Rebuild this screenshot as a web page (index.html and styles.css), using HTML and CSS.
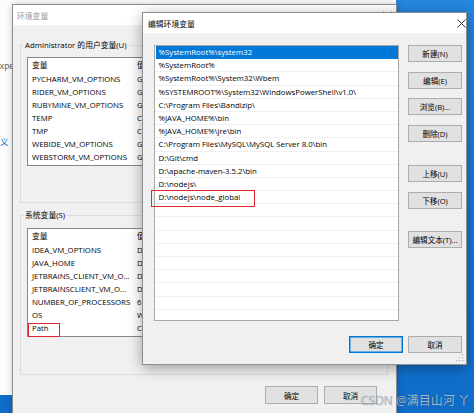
FILE: index.html
```html
<!DOCTYPE html>
<html lang="zh">
<head>
<meta charset="utf-8">
<title>编辑环境变量</title>
<link rel="stylesheet" href="styles.css">
</head>
<body>
<div class="desktop">
  <div class="settings">
    <div class="s-exp">Experience</div>
    <div class="s-link">自定义</div>
  </div>

  <div class="win env">
    <div class="titlebar">
      <span class="title inactive">环境变量</span>
      <svg class="close" viewBox="0 0 10 10" width="9" height="9"><path d="M0.5 0.5 L9.5 9.5 M9.5 0.5 L0.5 9.5" stroke="#777" stroke-width="1" fill="none"/></svg>
    </div>
    <div class="env-body">
      <fieldset class="group g-user">
        <legend>Administrator 的用户变量(U)</legend>
        <div class="lv">
          <div class="lv-head"><span class="c1">变量</span><span class="c2">值</span></div>
          <div class="lv-row"><span class="c1">PYCHARM_VM_OPTIONS</span><span class="c2">G:\...</span></div>
          <div class="lv-row"><span class="c1">RIDER_VM_OPTIONS</span><span class="c2">G:\...</span></div>
          <div class="lv-row"><span class="c1">RUBYMINE_VM_OPTIONS</span><span class="c2">G:\...</span></div>
          <div class="lv-row"><span class="c1">TEMP</span><span class="c2">C:\...</span></div>
          <div class="lv-row"><span class="c1">TMP</span><span class="c2">C:\...</span></div>
          <div class="lv-row"><span class="c1">WEBIDE_VM_OPTIONS</span><span class="c2">G:\...</span></div>
          <div class="lv-row"><span class="c1">WEBSTORM_VM_OPTIONS</span><span class="c2">G:\...</span></div>
        </div>
      </fieldset>

      <fieldset class="group g-sys">
        <legend>系统变量(S)</legend>
        <div class="lv">
          <div class="lv-head"><span class="c1">变量</span><span class="c2">值</span></div>
          <div class="lv-row"><span class="c1">IDEA_VM_OPTIONS</span><span class="c2">D:\...</span></div>
          <div class="lv-row"><span class="c1">JAVA_HOME</span><span class="c2">D:\...</span></div>
          <div class="lv-row"><span class="c1">JETBRAINS_CLIENT_VM_O...</span><span class="c2">D:\...</span></div>
          <div class="lv-row"><span class="c1">JETBRAINSCLIENT_VM_O...</span><span class="c2">D:\...</span></div>
          <div class="lv-row"><span class="c1">NUMBER_OF_PROCESSORS</span><span class="c2">6</span></div>
          <div class="lv-row"><span class="c1">OS</span><span class="c2">W...</span></div>
          <div class="lv-row"><span class="c1">Path</span><span class="c2">C:\...</span></div>
        </div>
        <div class="btnrow">
          <button class="btn">新建(W)...</button>
          <button class="btn">编辑(I)...</button>
          <button class="btn">删除(L)</button>
        </div>
      </fieldset>

      <div class="env-foot">
        <button class="btn big">确定</button>
        <button class="btn big">取消</button>
      </div>
    </div>
    <div class="mark mark-path"></div>
  </div>

  <div class="win edit">
    <div class="titlebar">
      <span class="title">编辑环境变量</span>
      <svg class="close" viewBox="0 0 10 10" width="9" height="9"><path d="M0.5 0.5 L9.5 9.5 M9.5 0.5 L0.5 9.5" stroke="#222" stroke-width="1" fill="none"/></svg>
    </div>
    <div class="edit-body">
      <div class="elist">
        <div class="er sel">%SystemRoot%\system32</div>
        <div class="er">%SystemRoot%</div>
        <div class="er">%SystemRoot%\System32\Wbem</div>
        <div class="er">%SYSTEMROOT%\System32\WindowsPowerShell\v1.0\</div>
        <div class="er">C:\Program Files\Bandizip\</div>
        <div class="er">%JAVA_HOME%\bin</div>
        <div class="er">%JAVA_HOME%\jre\bin</div>
        <div class="er">C:\Program Files\MySQL\MySQL Server 8.0\bin</div>
        <div class="er">D:\Git\cmd</div>
        <div class="er">D:\apache-maven-3.5.2\bin</div>
        <div class="er">D:\nodejs\</div>
        <div class="er">D:\nodejs\node_global</div>
        <div class="er"></div>
        <div class="er"></div>
        <div class="er"></div>
        <div class="er"></div>
        <div class="er"></div>
        <div class="er"></div>
        <div class="er"></div>
        <div class="er"></div>
        <div class="er"></div>
        <div class="er"></div>
      </div>
      <div class="ebtns">
        <button class="btn eb">新建(N)</button>
        <button class="btn eb">编辑(E)</button>
        <button class="btn eb">浏览(B)...</button>
        <button class="btn eb">删除(D)</button>
        <button class="btn eb sep">上移(U)</button>
        <button class="btn eb">下移(O)</button>
        <button class="btn eb sep2">编辑文本(T)...</button>
      </div>
    </div>
    <div class="edit-foot">
      <button class="btn eb default">确定</button>
      <button class="btn eb">取消</button>
    </div>
    <div class="mark mark-node"></div>
    <svg class="grip" viewBox="0 0 8 8" width="8" height="8">
      <rect x="6" y="0" width="1.2" height="1.2" fill="#b5b5b5"/>
      <rect x="3" y="3" width="1.2" height="1.2" fill="#b5b5b5"/>
      <rect x="6" y="3" width="1.2" height="1.2" fill="#b5b5b5"/>
      <rect x="0" y="6" width="1.2" height="1.2" fill="#b5b5b5"/>
      <rect x="3" y="6" width="1.2" height="1.2" fill="#b5b5b5"/>
      <rect x="6" y="6" width="1.2" height="1.2" fill="#b5b5b5"/>
    </svg>
  </div>

  <div class="watermark">CSDN @满目山河 丫</div>
</div>
</body>
</html>
```

FILE: styles.css
```css
* {
  box-sizing: border-box;
}

body {
  margin: 0;
  width: 474px;
  height: 413px;
  overflow: hidden;
  font-family: "Open Sans", "Noto Sans CJK SC", sans-serif;
  font-size: 7.8px;
  color: #000;
}

.desktop {
  position: relative;
  width: 474px;
  height: 413px;
  overflow: hidden;
  background: linear-gradient(180deg, #2587dd 0%, #1677d3 60%, #0f6cc9 100%);
}

/* settings window far behind */
.settings {
  position: absolute;
  left: -120px;
  top: 0;
  width: 516px;
  height: 395px;
  background: #fdfdfd;
  padding-top: 60px;
  font-size: 8.5px;
  white-space: nowrap;
}

.s-exp {
  margin-left: 115px;
  line-height: 12px;
  color: #555;
}

.s-link {
  margin-left: 103px;
  margin-top: 64px;
  line-height: 12px;
  color: #0067c0;
}

/* generic window */
.win {
  position: absolute;
  background: #f0f0f0;
}

.titlebar {
  height: 20px;
  background: #fff;
  display: flex;
  align-items: center;
  font-size: 7.8px;
}

.title.inactive {
  color: #999;
}

.close {
  margin-left: auto;
  display: block;
}

/* 环境变量 window */
.env {
  left: 13px;
  top: 5px;
  width: 383px;
  height: 420px;
  box-shadow: 0 0 0 1px #8c8c8c, 0 0 8px rgba(0, 0, 0, 0.25);
}

.env .titlebar {
  padding-left: 4px;
}

.env .close {
  margin-right: 4.5px;
  margin-top: 1px;
}

.env-body {
  padding: 14.5px 8px 0 7px;
}

.group {
  margin: 0;
  border: 1px solid #dcdcdc;
  padding: 0 6px;
  min-width: 0;
}

.group legend {
  margin-left: -4px;
  padding: 0 2px;
  line-height: 11px;
  font-size: 7.8px;
}

.g-user {
  padding-top: 6.5px;
  padding-bottom: 36px;
}

.g-sys {
  margin-top: 6.5px;
  padding-top: 7.5px;
  padding-bottom: 10px;
}

.lv {
  background: #fff;
  border: 1px solid #828790;
  height: 109px;
  overflow: hidden;
}

.lv-head,
.lv-row {
  display: flex;
  align-items: center;
  padding-left: 4px;
  white-space: nowrap;
  line-height: 11px;
}

.lv-head {
  height: 14.5px;
}

.lv-row {
  height: 13px;
}

.c1 {
  width: 105px;
  flex: none;
}

.c2 {
  flex: none;
}

.btnrow {
  display: flex;
  justify-content: flex-end;
  gap: 5px;
  margin-top: 10px;
}

.btn {
  margin: 0;
  padding: 0;
  background: #e1e1e1;
  border: 1px solid #adadad;
  font-family: inherit;
  font-size: 7.6px;
  color: #000;
  width: 53px;
  height: 17px;
  display: flex;
  align-items: center;
  justify-content: center;
  white-space: nowrap;
}

.btn.big {
  height: 18px;
}

.env-foot {
  display: flex;
  justify-content: flex-end;
  gap: 6px;
  margin-top: 11px;
  padding-right: 11px;
}

/* 编辑环境变量 dialog */
.edit {
  left: 143px;
  top: 13px;
  width: 323px;
  height: 351px;
  box-shadow: 0 0 0 1px #8f8f8f, 0 3px 14px rgba(0, 0, 0, 0.4);
}

.edit .titlebar {
  padding-left: 5px;
}

.edit .close {
  margin-right: 0.5px;
}

.edit-body {
  display: flex;
  gap: 9px;
  padding: 12px 4px 0 11px;
}

.elist {
  width: 245px;
  height: 276px;
  background: #fff;
  border: 1px solid #a9a9a9;
  overflow: hidden;
  flex: none;
}

.er {
  height: 13.2px;
  line-height: 12px;
  border-bottom: 1px solid #f0f0f0;
  padding-left: 3.5px;
  white-space: nowrap;
}

.er.sel {
  background: #0078d7;
  color: #fff;
  border-bottom-color: #0078d7;
  margin-left: 1px;
  padding-left: 2.5px;
}

.ebtns {
  display: flex;
  flex-direction: column;
  gap: 9.5px;
  width: 54px;
}

.eb {
  width: 54px;
}

.eb.sep {
  margin-top: 14px;
}

.eb.sep2 {
  margin-top: 12.5px;
}

.edit-foot {
  display: flex;
  justify-content: flex-end;
  gap: 5px;
  margin-top: 15px;
  padding-right: 4px;
}

.btn.default {
  border-color: #0078d7;
  box-shadow: inset 0 0 0 0.5px #0078d7;
}

.grip {
  position: absolute;
  right: 2px;
  bottom: 2px;
}

/* red annotation boxes */
.mark {
  position: absolute;
  border: 1.5px solid #e0262c;
}

.mark-path {
  left: 15px;
  top: 318px;
  width: 32px;
  height: 14px;
}

.mark-node {
  left: 8px;
  top: 177px;
  width: 104px;
  height: 17px;
}

.watermark {
  position: absolute;
  left: 361px;
  top: 393px;
  font-size: 12px;
  line-height: 16px;
  color: rgba(190, 196, 206, 0.92);
  text-shadow: 0 0 1px rgba(0, 0, 0, 0.4);
  white-space: nowrap;
}
```
